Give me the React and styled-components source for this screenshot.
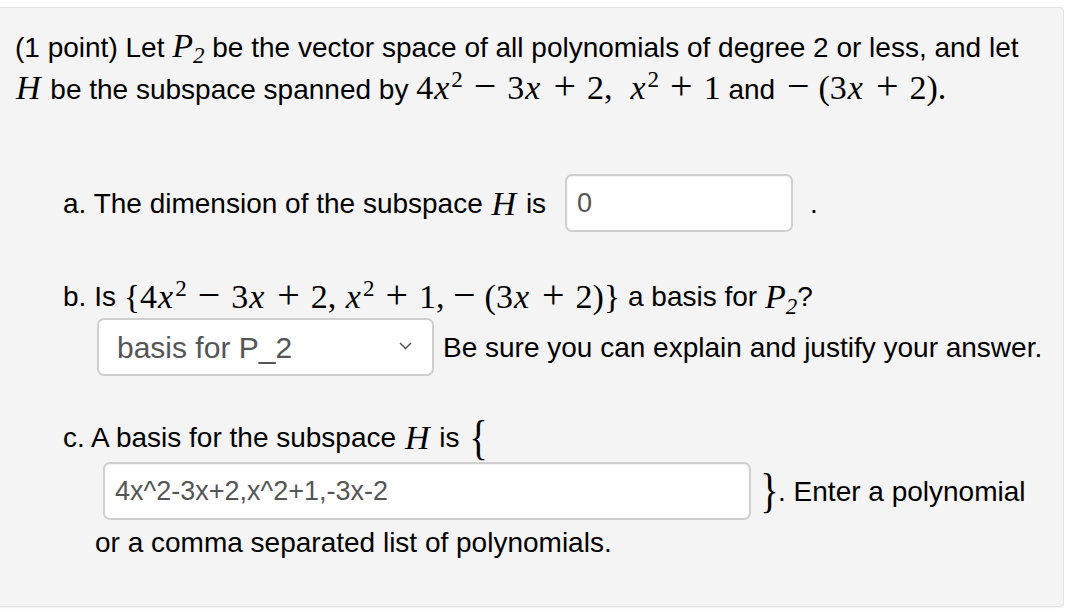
import React from "react";
import styled, { createGlobalStyle } from "styled-components";

const GlobalStyle = createGlobalStyle`
  html, body {
    margin: 0;
    padding: 0;
    background: #ffffff;
  }
  body {
    font-family: "Liberation Sans", Arial, sans-serif;
    color: #000;
    overflow: hidden;
  }
`;

const Page = styled.div`
  width: 1066px;
  height: 609px;
  padding-top: 7px;
  box-sizing: border-box;
  overflow: hidden;
`;

const Panel = styled.div`
  margin-left: -10px;
  width: 1074px;
  height: 600px;
  box-sizing: border-box;
  background: #f4f4f4;
  border: 1px solid #e3e3e3;
  border-radius: 4px;
  box-shadow: 0 1px 2px rgba(0, 0, 0, 0.06);
  padding: 18px 0 0 24px;
  font-size: 28px;
  line-height: 41px;
`;

const Intro = styled.p`
  margin: 0;
  line-height: 40px;
`;

const Part = styled.div`
  padding-left: 48px;
  margin-top: ${(p) => p.$top}px;
`;

const Line = styled.div`
  display: flex;
  align-items: center;
  white-space: nowrap;
`;

const Indented = styled.div`
  display: flex;
  align-items: center;
  white-space: nowrap;
  margin-left: ${(p) => p.$left}px;
  margin-top: ${(p) => p.$top || 0}px;
`;

const Math = styled.span`
  font-family: "Liberation Serif", "Times New Roman", serif;
  font-size: 34px;
  white-space: nowrap;
`;

const V = styled.i`
  font-style: italic;
  padding: 0 2px 0 1px;
`;

const Sup = styled.sup`
  font-size: 23px;
  line-height: 0;
  vertical-align: 12px;
`;

const Sub = styled.sub`
  font-size: 23px;
  line-height: 0;
  vertical-align: -6px;
`;

const Cal = styled.span`
  font-family: "Liberation Serif", serif;
  font-style: italic;
  font-size: 34px;
`;

const Op = styled.span`
  font-size: 40px;
  line-height: 0;
  margin: ${(p) => p.$m || "0 11px"};
`;

const BigBrace = styled.span`
  font-family: "Liberation Serif", serif;
  font-size: 48px;
  line-height: 40px;
  display: inline-block;
  transform: scaleX(0.8);
  margin: ${(p) => p.$m};
`;

const TextInput = styled.input`
  box-sizing: border-box;
  width: ${(p) => p.$w}px;
  height: 58px;
  padding: 0 10px;
  font-family: "Liberation Sans", Arial, sans-serif;
  font-size: 27px;
  color: #555;
  background: #fff;
  border: 2px solid #cfcfcf;
  border-radius: 7px;
  box-shadow: inset 0 1px 2px rgba(0, 0, 0, 0.06);
  outline: none;
  margin: ${(p) => p.$m};
`;

const SelectWrap = styled.div`
  position: relative;
  width: 337px;
  height: 58px;
  margin-right: 9px;
`;

const Select = styled.select`
  appearance: none;
  box-sizing: border-box;
  width: 100%;
  height: 100%;
  padding: 0 40px 0 18px;
  font-family: "Liberation Sans", Arial, sans-serif;
  font-size: 30px;
  color: #555;
  background: #fff;
  border: 2px solid #cfcfcf;
  border-radius: 7px;
  outline: none;
`;

const Chevron = styled.svg`
  position: absolute;
  right: 22px;
  top: 24px;
  pointer-events: none;
`;

const Period = styled.span`
  margin-left: 17px;
`;

const P2 = () => (
  <Cal>
    P<Sub>2</Sub>
  </Cal>
);

const x2 = (
  <>
    <V>x</V>
    <Sup>2</Sup>
  </>
);

export default function App() {
  return (
    <Page>
      <GlobalStyle />
      <Panel>
        <Intro>
          (1 point) Let <P2 /> be the vector space of all polynomials of degree 2 or less, and let
          <br />
          <Math>
            <V>H</V>
          </Math>{" "}
          be the subspace spanned by{" "}
          <Math>
            4{x2}
            <Op>−</Op>3<V>x</V>
            <Op>+</Op>2,&nbsp;&nbsp;{x2}
            <Op>+</Op>1
          </Math>{" "}
          and{" "}
          <Math>
            <Op $m="0 9px 0 4px">−</Op>(3<V>x</V>
            <Op>+</Op>2).
          </Math>
        </Intro>

        <Part $top={64}>
          <Line>
            a. The dimension of the subspace&nbsp;
            <Math>
              <V>H</V>
            </Math>
            &nbsp;is
            <TextInput $w={228} $m="0 0 0 19px" defaultValue="0" />
            <Period>.</Period>
          </Line>
        </Part>

        <Part $top={44}>
          <Line>
            b. Is&nbsp;
            <Math>
              {"{"}4{x2}
              <Op>−</Op>3<V>x</V>
              <Op>+</Op>2, {x2}
              <Op>+</Op>1, <Op $m="0 9px 0 0">−</Op>(3<V>x</V>
              <Op>+</Op>2){"}"}
            </Math>
            &nbsp;a basis for&nbsp;<P2 />?
          </Line>
          <Indented $left={34} $top={1}>
            <SelectWrap>
              <Select defaultValue="basis">
                <option value="basis">basis for P_2</option>
                <option value="not">not a basis for P_2</option>
              </Select>
              <Chevron width="13" height="8" viewBox="0 0 13 8">
                <path d="M1 1l5.5 5.5L12 1" fill="none" stroke="#555" strokeWidth="1.5" />
              </Chevron>
            </SelectWrap>
            Be sure you can explain and justify your answer.
          </Indented>
        </Part>

        <Part $top={41}>
          <Line>
            c. A basis for the subspace&nbsp;
            <Math>
              <V>H</V>
            </Math>
            &nbsp;is&nbsp;
            <BigBrace $m="0">{"{"}</BigBrace>
          </Line>
          <Indented $left={40} $top={4}>
            <TextInput $w={648} $m="0" defaultValue="4x^2-3x+2,x^2+1,-3x-2" />
            <BigBrace $m="0 -3px 0 7px">{"}"}</BigBrace>. Enter a polynomial
          </Indented>
          <Indented $left={32} $top={2}>
            or a comma separated list of polynomials.
          </Indented>
        </Part>
      </Panel>
    </Page>
  );
}
